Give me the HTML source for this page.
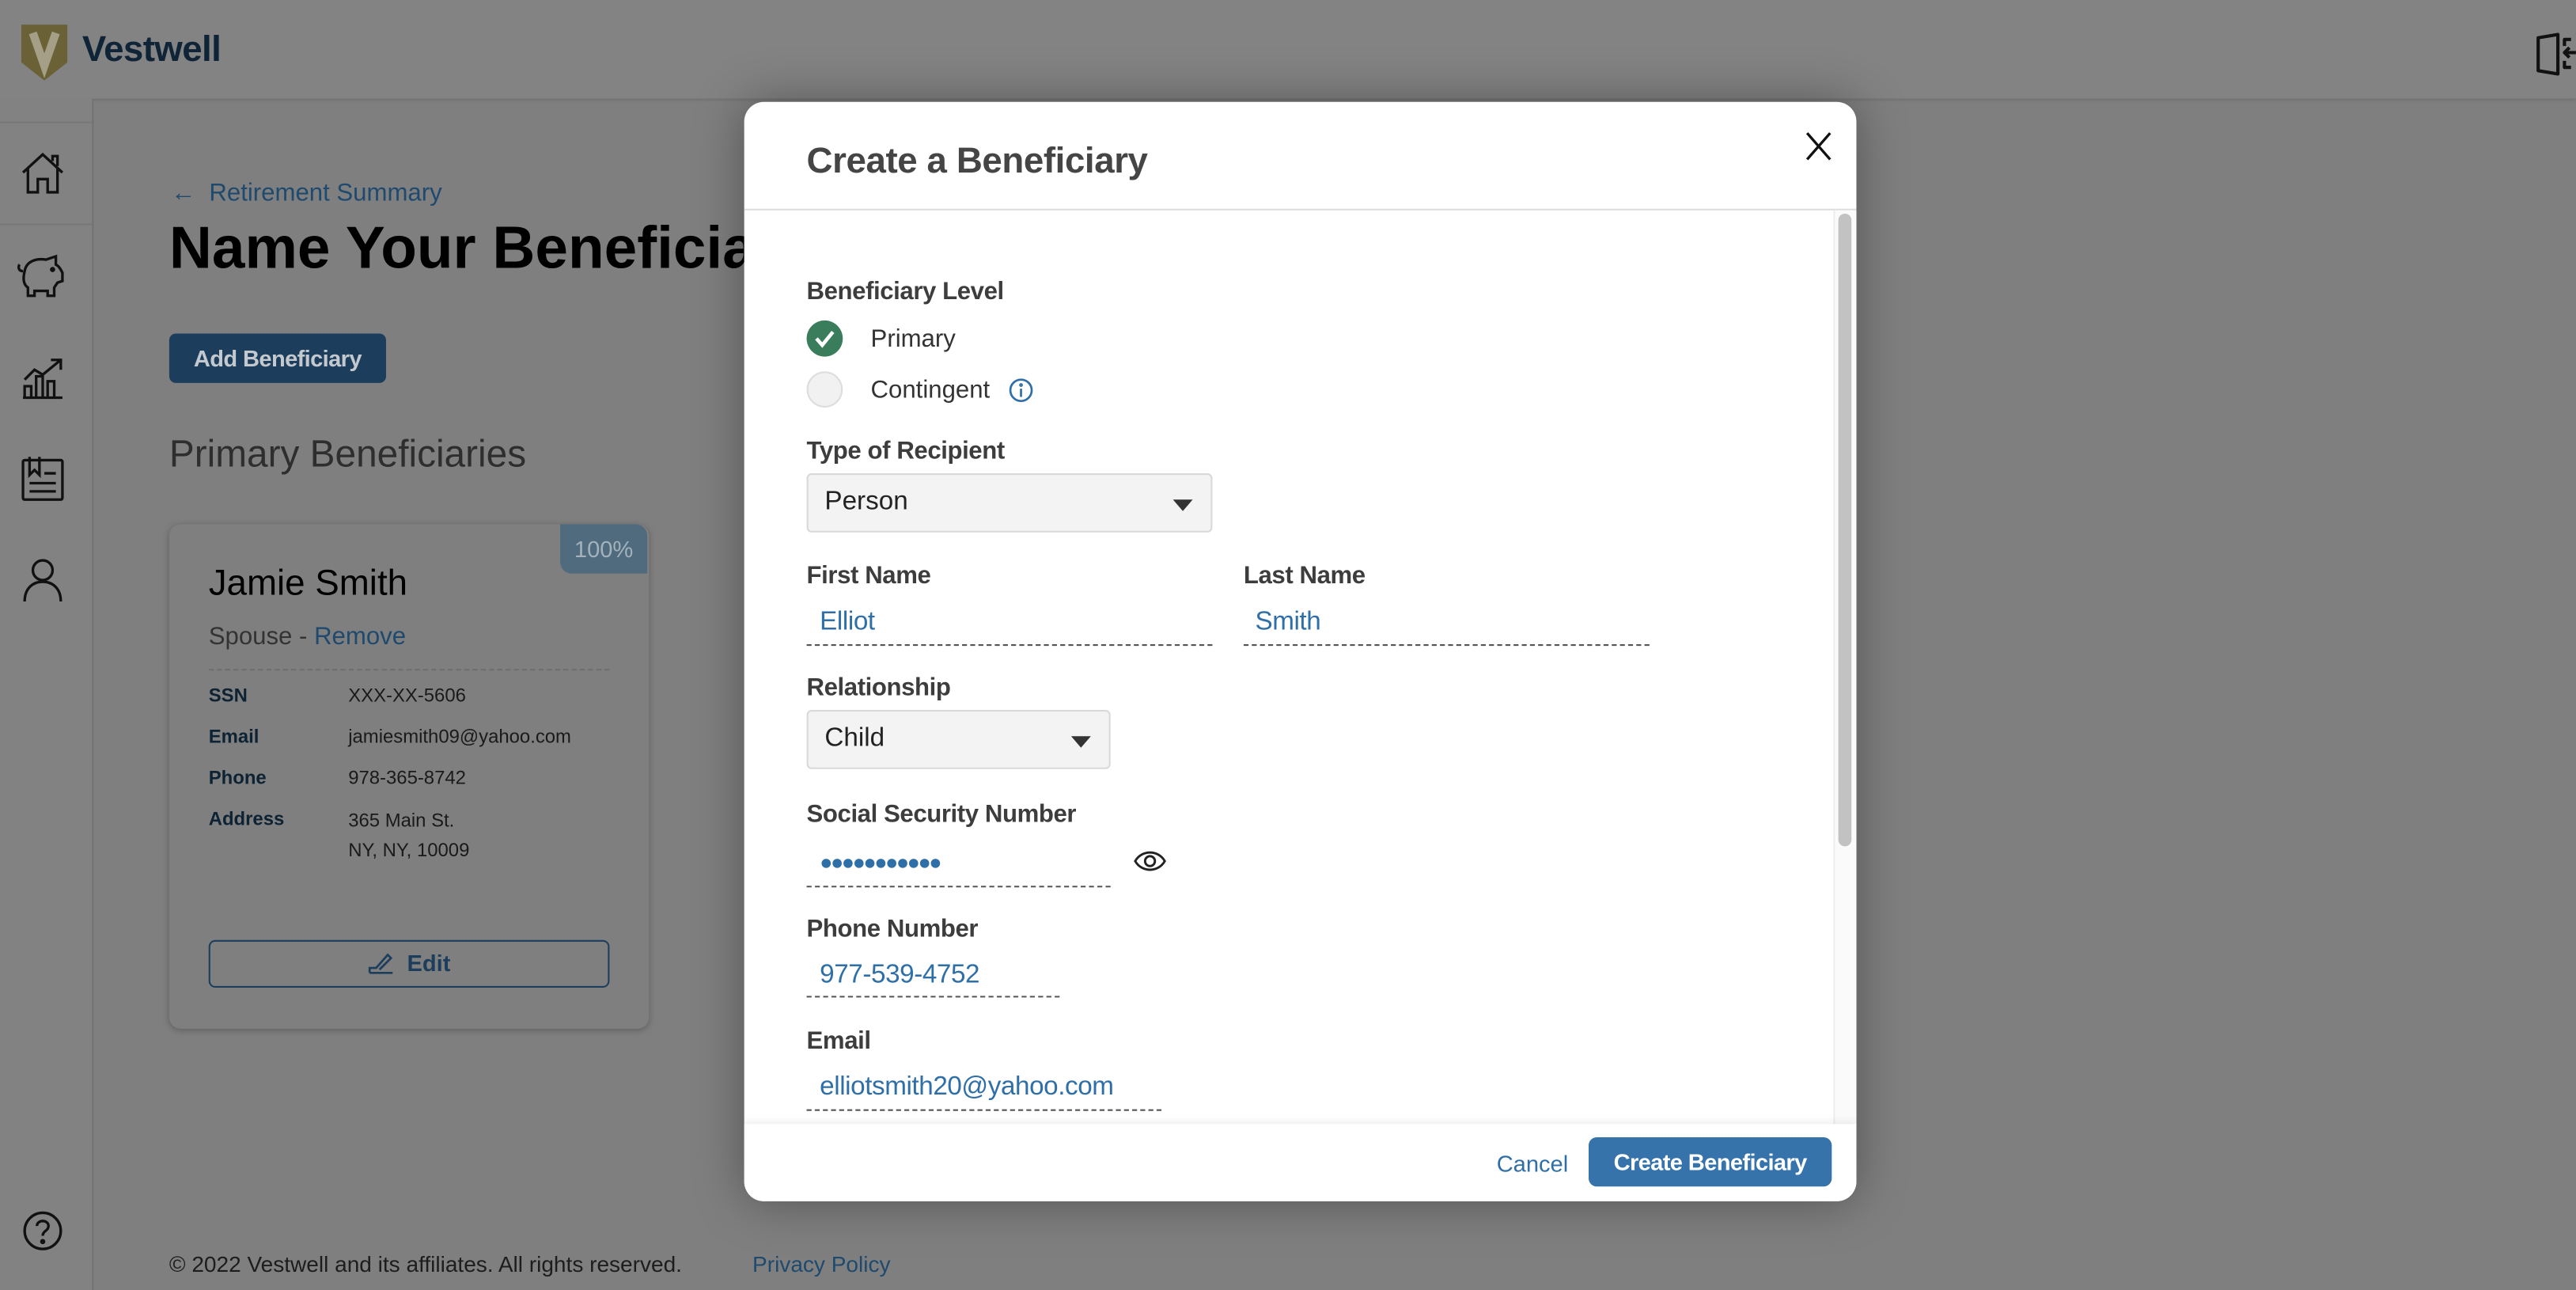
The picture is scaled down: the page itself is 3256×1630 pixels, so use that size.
<!DOCTYPE html>
<html><head><meta charset="utf-8"><style>
html,body{margin:0;padding:0;width:3256px;height:1630px;overflow:hidden;background:#7f7f7f;font-family:"Liberation Sans",sans-serif}
#w{position:absolute;left:0;top:0;width:1568px;height:785px;transform:scale(2.0765);transform-origin:0 0}
.a{position:absolute;white-space:nowrap}
.lbl{position:absolute;font-size:15px;font-weight:bold;color:#3d3d3d;line-height:20px;letter-spacing:-0.2px}
.val{position:absolute;font-size:16px;color:#2f6fa8;line-height:20px;letter-spacing:-0.2px}
.dash{position:absolute;height:0;border-top:1px dashed #555}
.sel{position:absolute;background:#f3f3f3;border:1px solid #d9d9d9;border-radius:3px;box-sizing:border-box}
.sel span{position:absolute;left:10px;top:50%;transform:translateY(-50%);font-size:16px;color:#222}
.sel i{position:absolute;right:11px;top:50%;margin-top:-2px;width:0;height:0;border-left:6px solid transparent;border-right:6px solid transparent;border-top:7px solid #333}
.row{position:absolute;font-size:11.5px;color:#1a1a1a}
.row b{color:#0d2233}
</style></head><body><div id="w">
<!-- header -->
<div class="a" style="left:0;top:0;width:1568px;height:60px;background:#838383;box-shadow:0 1px 2px rgba(0,0,0,.15)"></div>
<svg class="a" style="left:12px;top:14px" width="30" height="36" viewBox="0 0 30 36"><path d="M1 1H29V24L15 35L1 24Z" fill="#6b6137"/><path d="M8 6L15 26L22 6" fill="none" stroke="#a59f88" stroke-width="5"/></svg>
<div class="a" style="left:50px;top:17px;font-size:22px;font-weight:bold;color:#0f2436;letter-spacing:-0.3px">Vestwell</div>
<svg class="a" style="left:1540px;top:32px;transform:translateY(-50%)" width="28" height="30" viewBox="0 0 28 30" fill="none" stroke="#111" stroke-width="2" stroke-linejoin="round"><path d="M5 6L17 4V28L5 26Z"/><path d="M25 7H21V11M21 20V24H25M28 15H22M24 12L21 15L24 18"/></svg>
<!-- sidebar -->
<div class="a" style="left:0;top:60px;width:56px;height:725px;background:#828282;border-right:1px solid #727272"></div>
<div class="a" style="left:0;top:74px;width:56px;border-top:1px solid #777"></div>
<div class="a" style="left:0;top:136px;width:56px;border-top:1px solid #777"></div>
<svg class="a" style="left:12px;top:91px" width="28" height="28" viewBox="0 0 28 28" fill="none" stroke="#111" stroke-width="1.6"><path d="M2 14L14 3L26 14M5 11V26H11V18H17V26H23V11M20 7V4H23V10"/></svg>
<svg class="a" style="left:10px;top:153px" width="30" height="30" viewBox="0 0 30 30" fill="none" stroke="#111" stroke-width="1.6"><path d="M4 12C1 12 1 9 2 8M5 12C6 6 12 4 18 5L24 3V8C26 9 27 11 28 13V18L25 19L23 22V27H19V24H11V27H7V22C4 20 4 16 5 12Z"/><circle cx="22" cy="11" r="0.8"/></svg>
<svg class="a" style="left:12px;top:215px" width="28" height="28" viewBox="0 0 28 28" fill="none" stroke="#111" stroke-width="1.6"><path d="M2 27H26M3 27V20H7V27M10 27V14H14V27M17 27V17H21V27M3 16L9 10L14 13L25 4M19 4H25V10"/></svg>
<svg class="a" style="left:13px;top:277px" width="26" height="28" viewBox="0 0 26 28" fill="none" stroke="#111" stroke-width="1.6"><rect x="1" y="3" width="24" height="24" rx="1"/><path d="M5 1V12L8 9L11 12V1M14 11H21M5 17H21M5 22H21"/></svg>
<svg class="a" style="left:13px;top:339px" width="26" height="28" viewBox="0 0 26 28" fill="none" stroke="#111" stroke-width="1.6"><circle cx="13" cy="8" r="6"/><path d="M2 27C2 19 7 15 13 15C19 15 24 19 24 27"/></svg>
<svg class="a" style="left:14px;top:737px" width="24" height="24" viewBox="0 0 24 24" fill="none" stroke="#111" stroke-width="1.6"><circle cx="12" cy="12" r="11"/><path d="M8.5 9C8.5 5 15.5 5 15.5 9C15.5 12 12 12 12 15"/><circle cx="12" cy="18.5" r="0.8"/></svg>
<!-- main -->
<div class="a" style="left:104px;top:109px;font-size:15px;color:#1f4a6e">&larr;&nbsp; Retirement Summary</div>
<div class="a" style="left:103px;top:130px;font-size:36px;font-weight:bold;color:#000;letter-spacing:0px">Name Your Beneficiary</div>
<div class="a" style="left:103px;top:203px;width:132px;height:30px;background:#1c3e5c;border-radius:4px;color:#c3c9cf;font-size:14px;font-weight:bold;text-align:center;line-height:30px;letter-spacing:-0.3px">Add Beneficiary</div>
<div class="a" style="left:103px;top:263px;font-size:23px;color:#2e2e2e">Primary Beneficiaries</div>
<div class="a" style="left:103px;top:319px;width:292px;height:307px;background:#7f7f7f;border-radius:7px;box-shadow:0 1px 4px rgba(0,0,0,.25)"></div>
<div class="a" style="left:341px;top:319px;width:53px;height:30px;background:#506b7e;border-radius:0 7px 0 7px;color:#a3b2bd;font-size:14px;text-align:center;line-height:30px">100%</div>
<div class="a" style="left:127px;top:342px;font-size:22px;color:#000">Jamie Smith</div>
<div class="a" style="left:127px;top:379px;font-size:15px;color:#333">Spouse - <span style="color:#1f4a6e">Remove</span></div>
<div class="dash" style="left:127px;top:407px;width:244px;border-top-color:#6e6e6e"></div>
<div class="row" style="left:127px;top:418px"><b>SSN</b></div><div class="row" style="left:212px;top:418px">XXX-XX-5606</div>
<div class="row" style="left:127px;top:443px"><b>Email</b></div><div class="row" style="left:212px;top:443px">jamiesmith09@yahoo.com</div>
<div class="row" style="left:127px;top:468px"><b>Phone</b></div><div class="row" style="left:212px;top:468px">978-365-8742</div>
<div class="row" style="left:127px;top:493px"><b>Address</b></div><div class="row" style="left:212px;top:491px;line-height:18px">365 Main St.<br>NY, NY, 10009</div>
<div class="a" style="left:127px;top:572px;width:244px;height:29px;border:1px solid #1c3e5c;border-radius:4px;box-sizing:border-box;text-align:center;line-height:27px;font-size:14px;font-weight:bold;color:#1c3e5c"><svg width="16" height="14" viewBox="0 0 16 14" fill="none" stroke="#1c3e5c" stroke-width="1.3" style="vertical-align:-2px;margin-right:8px"><path d="M1 13H15M1 13V10H5L12 2L14 4L7 11"/></svg>Edit</div>
<div class="a" style="left:103px;top:762px;font-size:13.5px;color:#1d1d1d">© 2022 Vestwell and its affiliates. All rights reserved.</div>
<div class="a" style="left:458px;top:762px;font-size:13.5px;color:#1f4a6e">Privacy Policy</div>
<!-- modal -->
<div class="a" style="left:453px;top:62px;width:677px;height:669px;background:#fff;border-radius:12px;box-shadow:0 0 30px rgba(0,0,0,.35);overflow:hidden">
  <div class="a" style="left:38px;top:23px;font-size:22px;font-weight:bold;color:#454545;letter-spacing:-0.2px">Create a Beneficiary</div>
  <svg class="a" style="left:646px;top:18px" width="16" height="18" viewBox="0 0 16 18" stroke="#111" stroke-width="1.6"><path d="M1 1L15 17M15 1L1 17"/></svg>
  <div class="a" style="left:0;top:65px;width:677px;border-top:1px solid #ddd"></div>
  <div class="a" style="left:663px;top:66px;width:14px;height:556px;background:#fafafa;border-left:1px solid #eee"></div>
  <div class="a" style="left:666px;top:68px;width:8px;height:385px;background:#c2c2c2;border-radius:4px"></div>
  <div class="lbl" style="left:38px;top:106px">Beneficiary Level</div>
  <div class="a" style="left:38px;top:133px;width:22px;height:22px;border-radius:50%;background:#3a7d5c"><svg width="22" height="22" viewBox="0 0 22 22" fill="none" stroke="#fff" stroke-width="2.2"><path d="M6 11L9.5 15L16 7"/></svg></div>
  <div class="a" style="left:77px;top:136px;font-size:15px;color:#333">Primary</div>
  <div class="a" style="left:38px;top:164px;width:22px;height:22px;border-radius:50%;background:#f1f1f1;border:1px solid #ddd;box-sizing:border-box"></div>
  <div class="a" style="left:77px;top:167px;font-size:15px;color:#333">Contingent</div>
  <svg class="a" style="left:161px;top:168px" width="15" height="15" viewBox="0 0 15 15" fill="none" stroke="#2f6fa8" stroke-width="1.3"><circle cx="7.5" cy="7.5" r="6.5"/><path d="M7.5 6.5V11.5"/><circle cx="7.5" cy="4.3" r="0.5"/></svg>
  <div class="lbl" style="left:38px;top:203px">Type of Recipient</div>
  <div class="sel" style="left:38px;top:226px;width:247px;height:36px"><span>Person</span><i></i></div>
  <div class="lbl" style="left:38px;top:279px">First Name</div>
  <div class="lbl" style="left:304px;top:279px">Last Name</div>
  <div class="val" style="left:46px;top:307px">Elliot</div>
  <div class="val" style="left:311px;top:307px">Smith</div>
  <div class="dash" style="left:38px;top:330px;width:247px"></div>
  <div class="dash" style="left:304px;top:330px;width:247px"></div>
  <div class="lbl" style="left:38px;top:347px">Relationship</div>
  <div class="sel" style="left:38px;top:370px;width:185px;height:36px"><span>Child</span><i></i></div>
  <div class="lbl" style="left:38px;top:424px">Social Security Number</div>
  <div class="val" style="left:46px;top:453px;font-size:13px;letter-spacing:-1.2px;font-weight:bold">●●●●●●●●●●●</div>
  <svg class="a" style="left:237px;top:455px" width="20" height="14" viewBox="0 0 20 14" fill="none" stroke="#222" stroke-width="1.4"><path d="M1 7C5 0 15 0 19 7C15 14 5 14 1 7Z"/><circle cx="10" cy="7" r="3"/></svg>
  <div class="dash" style="left:38px;top:477px;width:185px"></div>
  <div class="lbl" style="left:38px;top:494px">Phone Number</div>
  <div class="val" style="left:46px;top:522px">977-539-4752</div>
  <div class="dash" style="left:38px;top:544px;width:154px"></div>
  <div class="lbl" style="left:38px;top:562px">Email</div>
  <div class="val" style="left:46px;top:590px">elliotsmith20@yahoo.com</div>
  <div class="dash" style="left:38px;top:613px;width:216px"></div>
  <div class="a" style="left:0;top:622px;width:677px;height:47px;background:#fff;box-shadow:0 -2px 4px rgba(0,0,0,.06)"></div>
  <div class="a" style="left:458px;top:638px;font-size:14px;color:#2f6fa8">Cancel</div>
  <div class="a" style="left:514px;top:630px;width:148px;height:30px;background:#3573aa;border-radius:5px;color:#fff;font-size:14px;font-weight:bold;text-align:center;line-height:30px;letter-spacing:-0.3px">Create Beneficiary</div>
</div>
</div></body></html>
